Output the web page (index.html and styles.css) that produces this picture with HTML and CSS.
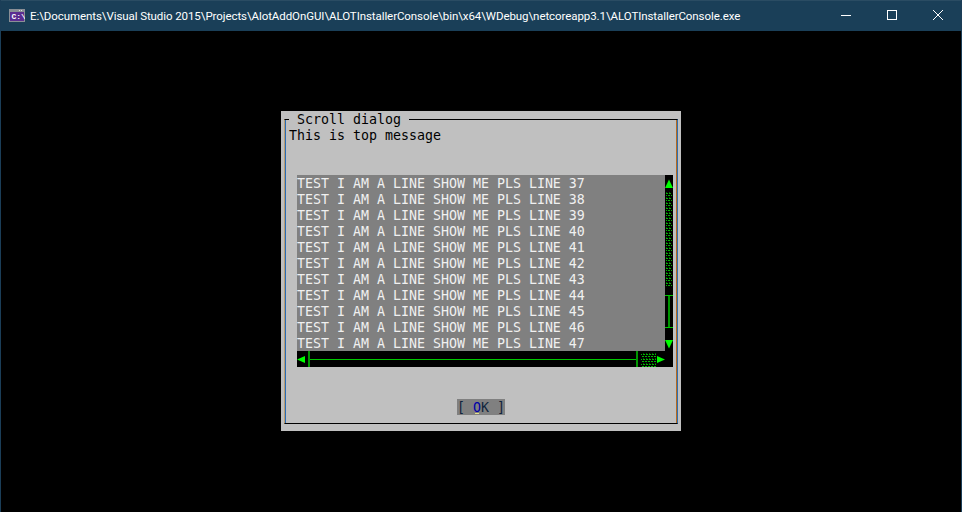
FILE: index.html
```html
<!DOCTYPE html>
<html lang="en">
<head>
<meta charset="utf-8">
<title>ALOTInstallerConsole</title>
<link rel="stylesheet" href="styles.css">
</head>
<body>
<div class="window">
  <header class="titlebar">
    <svg class="app-icon" width="16" height="13" viewBox="0 0 16 13">
      <rect x="0" y="0" width="16" height="13" fill="#8a8f96"/>
      <rect x="1" y="3" width="14" height="9" fill="#5b2d91"/>
      <rect x="10" y="1" width="1" height="1" fill="#dddddd"/>
      <rect x="12" y="1" width="1" height="1" fill="#dddddd"/>
      <text x="2.5" y="10" class="icon-text">C:\</text>
    </svg>
    <span class="title-text">E:\Documents\Visual Studio 2015\Projects\AlotAddOnGUI\ALOTInstallerConsole\bin\x64\WDebug\netcoreapp3.1\ALOTInstallerConsole.exe</span>
    <div class="caption-buttons">
      <svg class="caption" width="46" height="31" viewBox="0 0 46 31"><path d="M18 15.5h10" stroke="#fff" fill="none"/></svg>
      <svg class="caption" width="46" height="31" viewBox="0 0 46 31"><rect x="18.5" y="10.5" width="9" height="9" stroke="#fff" fill="none"/></svg>
      <svg class="caption" width="46" height="31" viewBox="0 0 46 31"><path d="M18 10l10 10M28 10l-10 10" stroke="#fff" fill="none"/></svg>
    </div>
  </header>
  <main class="console">
    <section class="dialog">
      <div class="frame"></div>
      <div class="row heading"><span class="heading-text">Scroll dialog</span></div>
      <div class="row message">This is top message</div>
      <div class="viewer">
        <div class="viewer-top">
          <ul class="lines">
            <li>TEST I AM A LINE SHOW ME PLS LINE 37</li>
            <li>TEST I AM A LINE SHOW ME PLS LINE 38</li>
            <li>TEST I AM A LINE SHOW ME PLS LINE 39</li>
            <li>TEST I AM A LINE SHOW ME PLS LINE 40</li>
            <li>TEST I AM A LINE SHOW ME PLS LINE 41</li>
            <li>TEST I AM A LINE SHOW ME PLS LINE 42</li>
            <li>TEST I AM A LINE SHOW ME PLS LINE 43</li>
            <li>TEST I AM A LINE SHOW ME PLS LINE 44</li>
            <li>TEST I AM A LINE SHOW ME PLS LINE 45</li>
            <li>TEST I AM A LINE SHOW ME PLS LINE 46</li>
            <li>TEST I AM A LINE SHOW ME PLS LINE 47</li>
          </ul>
          <svg class="vscroll" width="8" height="176" viewBox="0 0 8 176">
            <defs>
              <pattern id="dots-v" width="3" height="5" patternUnits="userSpaceOnUse">
                <rect x="0" y="0" width="2" height="1" fill="#00b400"/>
                <rect x="1" y="3" width="2" height="1" fill="#00b400"/>
                <rect x="1" y="2" width="1" height="1" fill="#005a00"/>
              </pattern>
            </defs>
            <rect width="8" height="176" fill="#000"/>
            <path d="M4 4.5 L8 13 L0 13 Z" fill="#00ff00"/>
            <rect x="1" y="17" width="6" height="95" fill="url(#dots-v)" shape-rendering="crispEdges"/>
            <rect x="0" y="120" width="8" height="1" fill="#00c800"/>
            <rect x="3" y="121" width="2" height="31" fill="#009600"/>
            <rect x="0" y="152" width="8" height="1" fill="#00c800"/>
            <path d="M0 165 L8 165 L4 173.5 Z" fill="#00ff00"/>
          </svg>
        </div>
        <svg class="hscroll" width="376" height="16" viewBox="0 0 376 16">
          <defs>
            <pattern id="dots-h" width="3" height="5" patternUnits="userSpaceOnUse">
              <rect x="0" y="0" width="2" height="1" fill="#00b400"/>
              <rect x="1" y="3" width="2" height="1" fill="#00b400"/>
              <rect x="1" y="2" width="1" height="1" fill="#005a00"/>
            </pattern>
          </defs>
          <rect width="376" height="16" fill="#000"/>
          <path d="M0 8.5 L8 5 L8 12 Z" fill="#00ff00"/>
          <rect x="11" y="0" width="2" height="16" fill="#009600"/>
          <rect x="13" y="8" width="326" height="1" fill="#00c800"/>
          <rect x="339" y="0" width="2" height="16" fill="#009600"/>
          <rect x="344" y="1" width="15" height="15" fill="url(#dots-h)" shape-rendering="crispEdges"/>
          <path d="M360 5 L368 8.5 L360 12 Z" fill="#00ff00"/>
        </svg>
      </div>
      <div class="actions"><button class="ok" type="button"><span>[ </span><span class="ok-hot">O</span><span>K ]</span></button></div>
    </section>
  </main>
</div>
</body>
</html>
```
FILE: styles.css
```css
* { box-sizing: border-box; }
html, body { margin: 0; padding: 0; background: #000; }
.window {
  width: 962px;
  height: 512px;
  display: flex;
  flex-direction: column;
  background: #000;
  border-left: 1px solid #1b3e58;
  border-right: 1px solid #1b3e58;
  overflow: hidden;
}
.titlebar {
  height: 31px;
  flex: none;
  display: flex;
  align-items: center;
  background: #1a3f58;
  box-shadow: inset 0 1px 0 #2a4c63;
  color: #fff;
  padding-left: 8px;
}
.app-icon { margin-right: 5px; flex: none; }
.icon-text { font: bold 8px "Liberation Mono", monospace; fill: #fff; }
.title-text {
  font: 11.5px Roboto, sans-serif;
  letter-spacing: -0.08px;
  white-space: nowrap;
  flex: 1;
}
.caption-buttons { display: flex; }
.caption { display: block; }
.console {
  flex: 1;
  display: flex;
  justify-content: center;
  align-items: flex-start;
  padding-top: 80px;
}
.dialog {
  position: relative;
  width: 400px;
  height: 320px;
  background: #c0c0c0;
  color: #000;
  font: 13.29px/18px "DejaVu Sans Mono", monospace;
}
.frame {
  position: absolute;
  left: 3px;
  top: 8px;
  right: 3px;
  bottom: 7px;
  border-top: 1px solid #000;
  border-bottom: 1px solid #000;
  border-left: 1px solid #b89a70;
  border-right: 1px solid #2f6fb0;
  box-shadow: inset 1px 0 0 #2a6db5, inset -1px 0 0 #b56a20;
}
.row { position: relative; height: 16px; white-space: pre; }
.heading { padding-left: 8px; }
.heading-text { background: #c0c0c0; padding: 0 8px; display: inline-block; height: 16px; }
.message { padding-left: 8px; }
.viewer { position: relative; margin: 32px 8px 0 16px; }
.viewer-top { display: flex; }
.lines {
  list-style: none;
  margin: 0;
  padding: 0;
  flex: 1;
  background: #808080;
  color: #f0f0f0;
}
.lines li { height: 16px; white-space: pre; }
.vscroll, .hscroll { display: block; flex: none; }
.actions { position: relative; display: flex; justify-content: center; margin-top: 32px; }
.ok {
  display: flex;
  align-items: flex-start;
  width: 48px;
  height: 16px;
  padding: 0;
  border: 0;
  background: #808080;
  color: #10243c;
  font: inherit;
  white-space: pre;
}
.ok-hot { position: relative; color: #0000a8; }
.ok-hot::after {
  content: "";
  position: absolute;
  left: 2px;
  bottom: 3px;
  width: 4px;
  height: 1px;
  background: #e6e08c;
}
```
